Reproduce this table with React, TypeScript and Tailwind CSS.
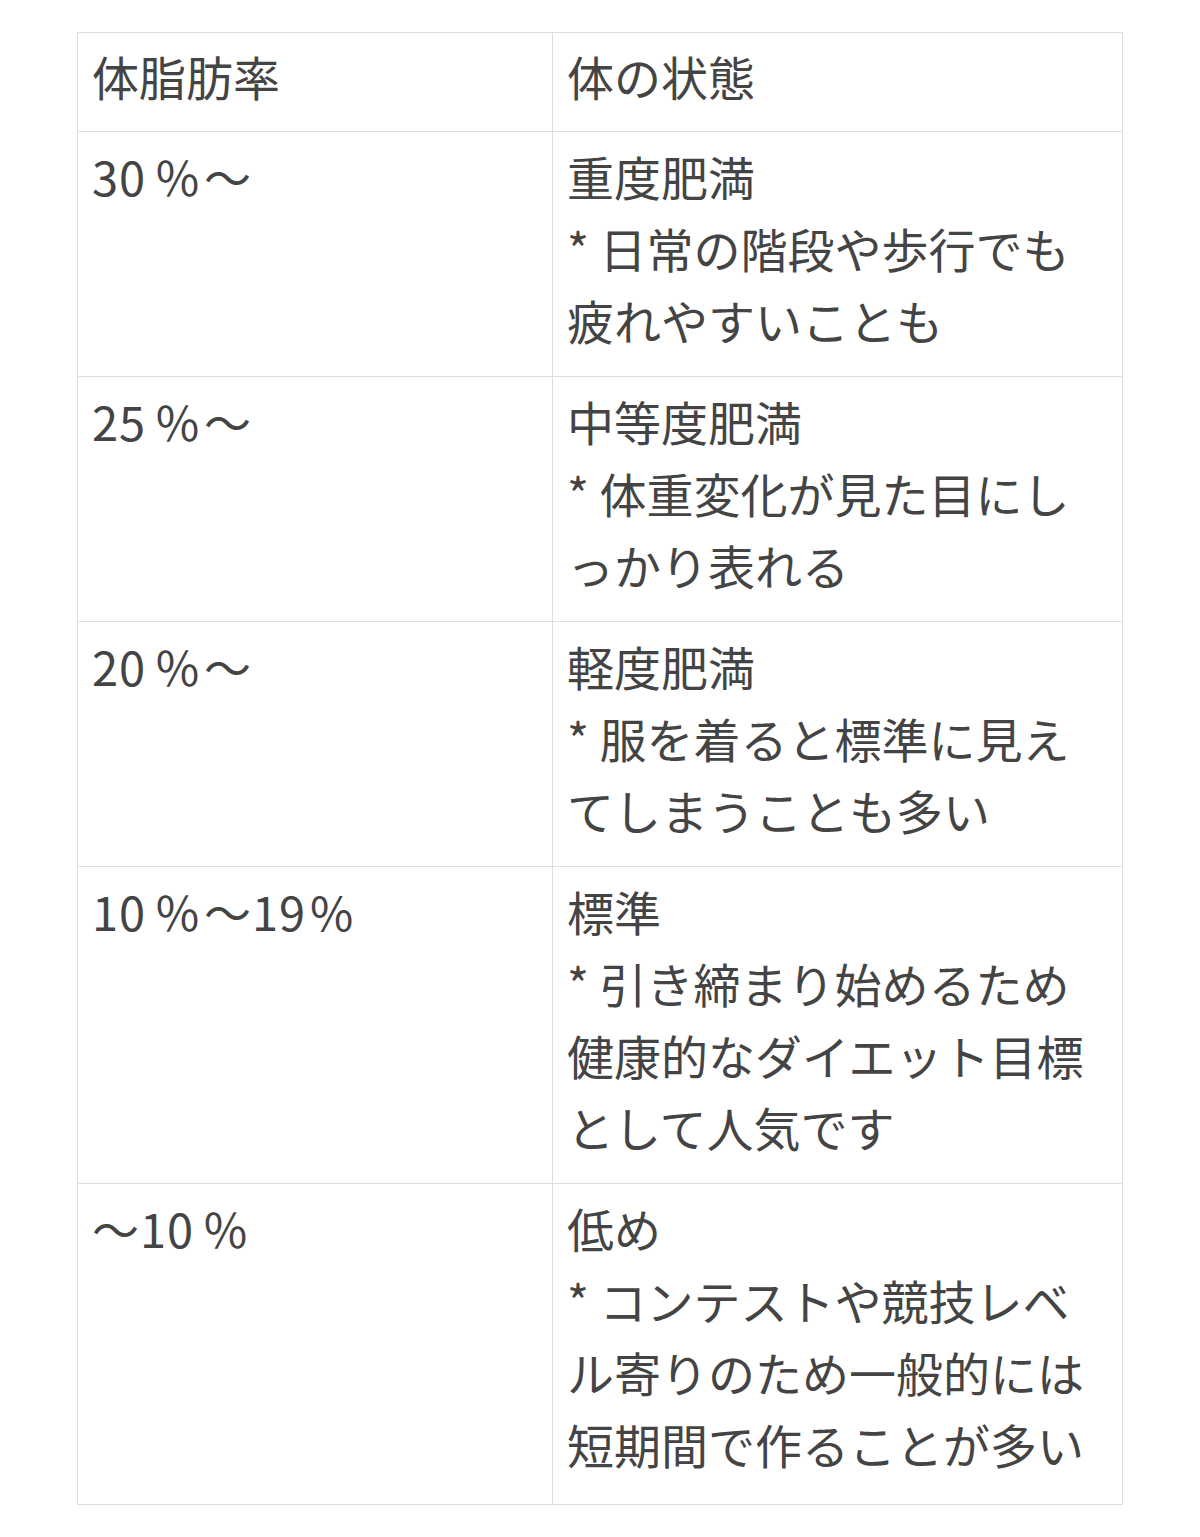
import React from "react";

interface Row {
  rate: React.ReactNode;
  key: string;
  lines: string[];
}

const Pct: React.FC = () => <span className="ml-[8px] mr-[2px]">％</span>;

const rows: Row[] = [
  {
    key: "30",
    rate: (
      <>
        30<Pct />～
      </>
    ),
    lines: ["重度肥満", "* 日常の階段や歩行でも", "疲れやすいことも"],
  },
  {
    key: "25",
    rate: (
      <>
        25<Pct />～
      </>
    ),
    lines: ["中等度肥満", "* 体重変化が見た目にし", "っかり表れる"],
  },
  {
    key: "20",
    rate: (
      <>
        20<Pct />～
      </>
    ),
    lines: ["軽度肥満", "* 服を着ると標準に見え", "てしまうことも多い"],
  },
  {
    key: "10-19",
    rate: (
      <>
        10<Pct />～19<span className="ml-[4px]">%</span>
      </>
    ),
    lines: ["標準", "* 引き締まり始めるため", "健康的なダイエット目標", "として人気です"],
  },
  {
    key: "10",
    rate: (
      <>
        ～10<Pct />
      </>
    ),
    lines: ["低め", "* コンテストや競技レベ", "ル寄りのため一般的には", "短期間で作ることが多い"],
  },
];

const App: React.FC = () => {
  return (
    <div
      className="min-h-[1537px] w-[1200px] bg-white pt-[32px] text-[#444444]"
      style={{ fontFamily: '"Noto Sans CJK JP", "Noto Sans", sans-serif' }}
    >
      <table className="mx-auto w-[1045px] table-fixed border-collapse text-[47px] leading-[72px]">
        <colgroup>
          <col className="w-[475px]" />
          <col className="w-[570px]" />
        </colgroup>
        <thead>
          <tr>
            <th className="border-[1.5px] border-[#dddddd] px-[14px] pt-[7px] pb-[19px] text-left font-normal">
              体脂肪率
            </th>
            <th className="border-[1.5px] border-[#dddddd] px-[14px] pt-[7px] pb-[19px] text-left font-normal">
              体の状態
            </th>
          </tr>
        </thead>
        <tbody>
          {rows.map((row, i) => (
            <tr key={row.key}>
              <td
                className={
                  i === rows.length - 1
                    ? "border-[1.5px] border-[#dddddd] px-[14px] pt-[8px] pb-[24px] align-top whitespace-nowrap tracking-[0.02em]"
                    : "border-[1.5px] border-[#dddddd] px-[14px] pt-[8px] pb-[20px] align-top whitespace-nowrap tracking-[0.02em]"
                }
              >
                {row.rate}
              </td>
              <td
                className={
                  i === rows.length - 1
                    ? "border-[1.5px] border-[#dddddd] px-[14px] pt-[8px] pb-[24px] align-top"
                    : "border-[1.5px] border-[#dddddd] px-[14px] pt-[8px] pb-[20px] align-top"
                }
              >
                {row.lines.map((line) => (
                  <div key={line} className="whitespace-nowrap">
                    {line}
                  </div>
                ))}
              </td>
            </tr>
          ))}
        </tbody>
      </table>
    </div>
  );
};

export default App;
